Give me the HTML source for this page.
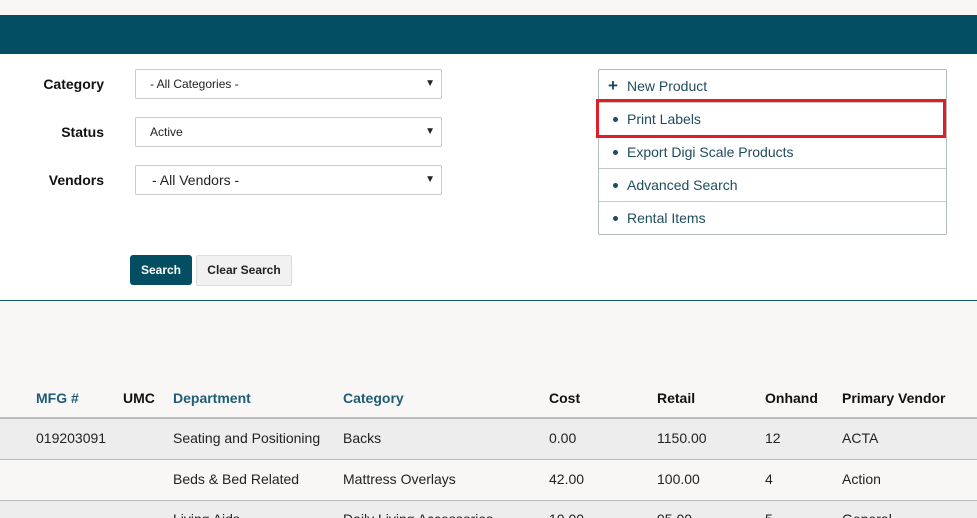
<!DOCTYPE html><html style="height:518px;overflow:hidden"><head><style>
body{margin:0;width:977px;height:518px;overflow:hidden;background:#f8f7f5;font-family:"Liberation Sans",sans-serif;position:relative}
.a{position:absolute}
.lbl{font-weight:bold;font-size:14px;color:#111;text-align:right;width:80px;left:24px}
.sel{left:135px;width:307px;height:30px;border:1px solid #ccc;border-radius:2px;background:#fff;font-size:12px;color:#222;box-sizing:border-box;padding-left:14px;line-height:28px}
.sel:after{content:"▼";position:absolute;right:6px;top:0;font-size:10px}
.it{left:599px;width:347px;height:33px;border-bottom:1px solid #c5cbcd;box-sizing:border-box;font-size:14px;color:#1f4c5e;line-height:32px;padding-left:28px}
.it b{position:absolute;left:14px;top:14px;width:5px;height:5px;border-radius:50%;background:#1f4c5e}
.th{top:390px;font-size:14px;font-weight:bold;color:#111}
.th.l{color:#1f5d76}
.td{font-size:14px;color:#222}
</style></head><body>
<div class="a" style="left:0;top:15px;width:977px;height:39px;background:#034e63"></div>
<div class="a" style="left:0;top:54px;width:977px;height:246px;background:#fff;border-bottom:1px solid #16566a"></div>
<div class="a lbl" style="top:76px">Category</div>
<div class="a lbl" style="top:124px">Status</div>
<div class="a lbl" style="top:172px">Vendors</div>
<div class="a sel" style="top:69px">- All Categories -</div>
<div class="a sel" style="top:117px">Active</div>
<div class="a sel" style="top:165px;font-size:14px;padding-left:16px">- All Vendors -</div>
<div class="a" style="left:130px;top:255px;width:62px;height:30px;background:#034e63;border-radius:3px;color:#fff;font-weight:bold;font-size:12px;text-align:center;line-height:30px">Search</div>
<div class="a" style="left:196px;top:255px;width:94px;height:29px;background:#f1f1f1;border:1px solid #ddd;border-radius:2px;color:#222;font-weight:bold;font-size:12px;text-align:center;line-height:29px">Clear Search</div>
<div class="a" style="left:598px;top:69px;width:349px;height:166px;border:1px solid #b4bcbf;border-radius:2px;box-sizing:border-box;background:#fff"></div>
<div class="a it" style="top:70px"><span class="a" style="left:9px;top:0;font-weight:bold;font-size:17px;color:#1f4c5e">+</span>New Product</div>
<div class="a it" style="top:103px"><b></b>Print Labels</div>
<div class="a it" style="top:136px"><b></b>Export Digi Scale Products</div>
<div class="a it" style="top:169px"><b></b>Advanced Search</div>
<div class="a it" style="top:202px;border-bottom:none"><b></b>Rental Items</div>
<div class="a" style="left:596px;top:99px;width:344px;height:33px;border:3px solid #e21d25"></div>
<div class="a th l" style="left:36px">MFG #</div>
<div class="a th" style="left:123px">UMC</div>
<div class="a th l" style="left:173px">Department</div>
<div class="a th l" style="left:343px">Category</div>
<div class="a th" style="left:549px">Cost</div>
<div class="a th" style="left:657px">Retail</div>
<div class="a th" style="left:765px">Onhand</div>
<div class="a th" style="left:842px">Primary Vendor</div>
<div class="a" style="left:0;top:417px;width:977px;height:2px;background:#b7bec0"></div>
<div class="a" style="left:0;top:419px;width:977px;height:40px;background:#ededed"></div>
<div class="a" style="left:0;top:459px;width:977px;height:1px;background:#b7bec0"></div>
<div class="a" style="left:0;top:500px;width:977px;height:1px;background:#b7bec0"></div>
<div class="a" style="left:0;top:501px;width:977px;height:17px;background:#ededed"></div>
<div class="a td" style="top:430px;left:36px">019203091</div><div class="a td" style="top:430px;left:173px">Seating and Positioning</div><div class="a td" style="top:430px;left:343px">Backs</div><div class="a td" style="top:430px;left:549px">0.00</div><div class="a td" style="top:430px;left:657px">1150.00</div><div class="a td" style="top:430px;left:765px">12</div><div class="a td" style="top:430px;left:842px">ACTA</div>
<div class="a td" style="top:471px;left:173px">Beds &amp; Bed Related</div><div class="a td" style="top:471px;left:343px">Mattress Overlays</div><div class="a td" style="top:471px;left:549px">42.00</div><div class="a td" style="top:471px;left:657px">100.00</div><div class="a td" style="top:471px;left:765px">4</div><div class="a td" style="top:471px;left:842px">Action</div>
<div class="a td" style="top:511px;left:173px">Living Aids</div><div class="a td" style="top:511px;left:343px">Daily Living Accessories</div><div class="a td" style="top:511px;left:549px">10.00</div><div class="a td" style="top:511px;left:657px">95.00</div><div class="a td" style="top:511px;left:765px">5</div><div class="a td" style="top:511px;left:842px">General</div>
</body></html>
